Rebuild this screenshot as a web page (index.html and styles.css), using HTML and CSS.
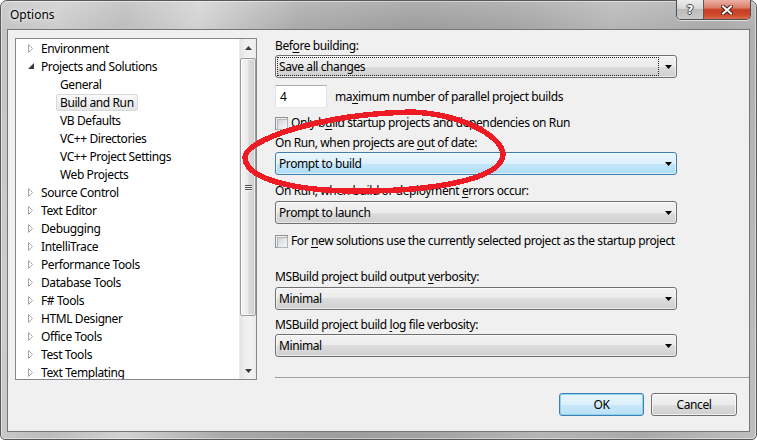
FILE: index.html
```html
<!DOCTYPE html>
<html>
<head>
<meta charset="utf-8">
<title>Options</title>
<link rel="stylesheet" href="styles.css">
</head>
<body>
<div class="window">
  <div class="titlebar">
    <span class="title">Options</span>
    <div class="caps">
      <div class="cap help"><span class="qm">?</span></div>
      <div class="cap close">
        <svg width="12" height="10" viewBox="0 0 12 10"><path d="M2 1.5 L10 8.5 M10 1.5 L2 8.5" stroke="#4a2118" stroke-width="4" stroke-linecap="square"/><path d="M2 1.5 L10 8.5 M10 1.5 L2 8.5" stroke="#ffffff" stroke-width="2" stroke-linecap="square"/></svg>
      </div>
    </div>
  </div>
  <div class="client">
    <div class="main">
      <div class="tree">
        <div class="tree-list">
          <div class="row"><span class="exp"><svg width="6" height="9" viewBox="0 0 6 9"><path d="M0.5 0.5 L4.5 4.5 L0.5 8.5 Z" fill="#fff" stroke="#a6a6a6"/></svg></span>Environment</div>
          <div class="row"><span class="exp"><svg width="6" height="6" viewBox="0 0 6 6"><path d="M6 0 L6 6 L0 6 Z" fill="#3c3c3c"/></svg></span>Projects and Solutions</div>
          <div class="row child">General</div>
          <div class="row child selected"><span class="sel">Build and Run</span></div>
          <div class="row child">VB Defaults</div>
          <div class="row child">VC++ Directories</div>
          <div class="row child">VC++ Project Settings</div>
          <div class="row child">Web Projects</div>
          <div class="row"><span class="exp"><svg width="6" height="9" viewBox="0 0 6 9"><path d="M0.5 0.5 L4.5 4.5 L0.5 8.5 Z" fill="#fff" stroke="#a6a6a6"/></svg></span>Source Control</div>
          <div class="row"><span class="exp"><svg width="6" height="9" viewBox="0 0 6 9"><path d="M0.5 0.5 L4.5 4.5 L0.5 8.5 Z" fill="#fff" stroke="#a6a6a6"/></svg></span>Text Editor</div>
          <div class="row"><span class="exp"><svg width="6" height="9" viewBox="0 0 6 9"><path d="M0.5 0.5 L4.5 4.5 L0.5 8.5 Z" fill="#fff" stroke="#a6a6a6"/></svg></span>Debugging</div>
          <div class="row"><span class="exp"><svg width="6" height="9" viewBox="0 0 6 9"><path d="M0.5 0.5 L4.5 4.5 L0.5 8.5 Z" fill="#fff" stroke="#a6a6a6"/></svg></span>IntelliTrace</div>
          <div class="row"><span class="exp"><svg width="6" height="9" viewBox="0 0 6 9"><path d="M0.5 0.5 L4.5 4.5 L0.5 8.5 Z" fill="#fff" stroke="#a6a6a6"/></svg></span>Performance Tools</div>
          <div class="row"><span class="exp"><svg width="6" height="9" viewBox="0 0 6 9"><path d="M0.5 0.5 L4.5 4.5 L0.5 8.5 Z" fill="#fff" stroke="#a6a6a6"/></svg></span>Database Tools</div>
          <div class="row"><span class="exp"><svg width="6" height="9" viewBox="0 0 6 9"><path d="M0.5 0.5 L4.5 4.5 L0.5 8.5 Z" fill="#fff" stroke="#a6a6a6"/></svg></span>F# Tools</div>
          <div class="row"><span class="exp"><svg width="6" height="9" viewBox="0 0 6 9"><path d="M0.5 0.5 L4.5 4.5 L0.5 8.5 Z" fill="#fff" stroke="#a6a6a6"/></svg></span>HTML Designer</div>
          <div class="row"><span class="exp"><svg width="6" height="9" viewBox="0 0 6 9"><path d="M0.5 0.5 L4.5 4.5 L0.5 8.5 Z" fill="#fff" stroke="#a6a6a6"/></svg></span>Office Tools</div>
          <div class="row"><span class="exp"><svg width="6" height="9" viewBox="0 0 6 9"><path d="M0.5 0.5 L4.5 4.5 L0.5 8.5 Z" fill="#fff" stroke="#a6a6a6"/></svg></span>Test Tools</div>
          <div class="row"><span class="exp"><svg width="6" height="9" viewBox="0 0 6 9"><path d="M0.5 0.5 L4.5 4.5 L0.5 8.5 Z" fill="#fff" stroke="#a6a6a6"/></svg></span>Text Templating</div>
        </div>
        <div class="vscroll">
          <div class="sb-btn"><svg width="7" height="4" viewBox="0 0 7 4"><path d="M3.5 0 L7 4 L0 4 Z" fill="#3b3b3b"/></svg></div>
          <div class="sb-track">
            <div class="thumb">
              <div class="grip"><i></i><i></i><i></i></div>
            </div>
          </div>
          <div class="sb-btn"><svg width="7" height="4" viewBox="0 0 7 4"><path d="M0 0 L7 0 L3.5 4 Z" fill="#3b3b3b"/></svg></div>
        </div>
      </div>
      <div class="right">
        <div class="panel">
          <div class="lbl">Bef<u>o</u>re building:</div>
          <div class="combo focused m1">
            <span class="focus">Save all changes</span>
            <svg class="arr" width="7" height="4" viewBox="0 0 7 4"><path d="M0 0 L7 0 L3.5 4 Z" fill="#000"/></svg>
          </div>
          <div class="num-row">
            <span class="textbox">4</span>
            <span>ma<u>x</u>imum number of parallel project builds</span>
          </div>
          <div class="chk-row r1"><span class="chk"></span><span>Only b<u>u</u>ild startup projects and dependencies on Run</span></div>
          <div class="lbl l2">On Run, when projects are <u>o</u>ut of date:</div>
          <div class="combo hover m1">
            <span class="ctext">Prompt to build</span>
            <svg class="arr" width="7" height="4" viewBox="0 0 7 4"><path d="M0 0 L7 0 L3.5 4 Z" fill="#000"/></svg>
          </div>
          <div class="lbl l3">On Run, when build or deployment <u>e</u>rrors occur:</div>
          <div class="combo m2">
            <span class="ctext">Prompt to launch</span>
            <svg class="arr" width="7" height="4" viewBox="0 0 7 4"><path d="M0 0 L7 0 L3.5 4 Z" fill="#000"/></svg>
          </div>
          <div class="chk-row r2"><span class="chk"></span><span>For <u>n</u>ew solutions use the currently selected project as the startup project</span></div>
          <div class="lbl l4">MSBuild project build output <u>v</u>erbosity:</div>
          <div class="combo m2">
            <span class="ctext">Minimal</span>
            <svg class="arr" width="7" height="4" viewBox="0 0 7 4"><path d="M0 0 L7 0 L3.5 4 Z" fill="#000"/></svg>
          </div>
          <div class="lbl l5">MSBuild project build <u>l</u>og file verbosity:</div>
          <div class="combo m1">
            <span class="ctext">Minimal</span>
            <svg class="arr" width="7" height="4" viewBox="0 0 7 4"><path d="M0 0 L7 0 L3.5 4 Z" fill="#000"/></svg>
          </div>
        </div>
        <div class="sep"></div>
      </div>
    </div>
    <div class="buttons">
      <div class="btn default ok">OK</div>
      <div class="btn cancel">Cancel</div>
    </div>
  </div>
</div>
<svg class="annot" width="757" height="440" viewBox="0 0 757 440">
  <path d="M 412 112 C 470 115, 504 140, 503 155 C 501 180, 430 192, 350 191 C 290 190, 246 178, 245 158 C 244 140, 320 114, 412 112 Z" fill="none" stroke="#ed1c24" stroke-width="5.5" shape-rendering="crispEdges"/>
</svg>
</body>
</html>
```

FILE: styles.css
```css
* { box-sizing: border-box; }
html, body { margin: 0; padding: 0; }
body {
  position: relative;
  width: 757px;
  height: 440px;
  background: #ffffff;
  font-family: "Noto Sans", "Segoe UI", sans-serif;
  font-size: 12px;
  letter-spacing: -0.4px;
  color: #000;
  overflow: hidden;
}
u { text-decoration: underline; text-underline-offset: 2px; }

.window {
  width: 757px;
  height: 440px;
  border: 1px solid #5a5a5a;
  border-radius: 7px 7px 5px 5px;
  padding: 0 6px 7px 6px;
  display: flex;
  flex-direction: column;
  background:
    linear-gradient(to bottom, rgba(255,255,255,0.18), rgba(255,255,255,0) 28px),
    linear-gradient(100deg, #c3c3c3 0%, #cdcdcd 7%, #bcbcbc 15%, #d2d2d2 24%, #aaaaaa 36%, #9d9d9d 50%, #a4a4a4 62%, #b6b6b6 74%, #a9a9a9 86%, #bfbfbf 100%);
  box-shadow: inset 0 0 0 1px rgba(255,255,255,0.45);
}

.titlebar {
  height: 28px;
  display: flex;
  justify-content: space-between;
  align-items: flex-start;
}
.title {
  padding: 6px 0 0 3px;
  line-height: 16px;
  color: #000;
  letter-spacing: 0;
  text-shadow: 0 0 6px rgba(255,255,255,0.9), 0 0 3px rgba(255,255,255,0.8);
}
.caps {
  display: flex;
  margin-top: -1px;
  margin-right: -1px;
  border: 1px solid #4e4e4e;
  border-top: none;
  border-radius: 0 0 5px 5px;
  overflow: hidden;
  box-shadow: 0 1px 0 rgba(255,255,255,0.6);
}
.cap {
  height: 19px;
  display: flex;
  align-items: center;
  justify-content: center;
}
.help {
  width: 27px;
  border-right: 1px solid #5a5a5a;
  background: linear-gradient(#ececec 0%, #d6d6d6 45%, #bcbcbc 50%, #c9c9c9 100%);
}
.qm {
  font-family: "DejaVu Sans", sans-serif;
  font-weight: bold;
  font-size: 12px;
  line-height: 12px;
  color: #fff;
  letter-spacing: 0;
  text-shadow: 1px 0 0 #444, -1px 0 0 #444, 0 1px 0 #444, 0 -1px 0 #444;
}
.close {
  width: 46px;
  background: linear-gradient(#eab1a5 0%, #dc7e69 40%, #c63d24 52%, #cf4a2e 80%, #dd6d4d 100%);
}

.client {
  height: 403px;
  border: 1px solid #767676;
  background: #f0f0f0;
  display: flex;
  flex-direction: column;
  padding: 8px 0 0 7px;
}
.main {
  display: flex;
  gap: 18px;
  height: 342px;
}

/* tree */
.tree {
  width: 242px;
  height: 342px;
  border: 1px solid #828790;
  background: #fff;
  display: flex;
  flex: none;
}
.tree-list {
  flex: 1;
  overflow: hidden;
}
.row {
  height: 18px;
  line-height: 16px;
  display: flex;
  align-items: center;
  white-space: nowrap;
  padding-left: 12px;
  padding-top: 2px;
}
.exp {
  width: 13px;
  flex: none;
  display: flex;
  align-items: center;
  margin-top: -2px;
}
.row.child { padding-left: 44px; }
.row.child.selected { padding-left: 40px; padding-top: 0; align-items: flex-end; }
.sel {
  height: 17px;
  display: flex;
  align-items: center;
  padding: 1px 3px 0 3px;
  border: 1px solid #d9d9d9;
  border-radius: 2px;
  background: linear-gradient(#fafafa, #e5e5e5);
}

.vscroll {
  width: 17px;
  flex: none;
  display: flex;
  flex-direction: column;
  background: linear-gradient(to right, #e3e3e3 0%, #eeeeee 30%, #f2f2f2 70%, #ebebeb 100%);
  border-left: 1px solid #ececec;
}
.sb-btn {
  height: 17px;
  display: flex;
  align-items: center;
  justify-content: center;
}
.sb-track {
  flex: 1;
  padding: 2px 0 0 0;
}
.thumb {
  height: 258px;
  border: 1px solid #9b9b9b;
  border-radius: 2px;
  background: linear-gradient(to right, #f4f4f4 0%, #ececec 45%, #dcdcdc 55%, #cdcdcd 100%);
  box-shadow: inset 0 0 0 1px rgba(255,255,255,0.6);
  display: flex;
  align-items: center;
  justify-content: center;
}
.grip {
  display: flex;
  flex-direction: column;
  gap: 1px;
}
.grip i {
  display: block;
  width: 7px;
  height: 1px;
  background: #4f4f4f;
  box-shadow: 0 1px 0 #f7f7f7;
}

/* right side */
.right {
  flex: 1;
  display: flex;
  flex-direction: column;
}
.panel {
  width: 402px;
  display: flex;
  flex-direction: column;
}
.lbl {
  height: 16px;
  line-height: 16px;
  white-space: nowrap;
}
.combo {
  height: 23px;
  border: 1px solid #707070;
  border-radius: 3px;
  display: flex;
  align-items: center;
  padding-left: 3px;
  padding-right: 4px;
  background: linear-gradient(#f2f2f2 0%, #ebebeb 50%, #dddddd 50%, #cfcfcf 100%);
  box-shadow: inset 0 0 0 1px rgba(255,255,255,0.55);
}
.combo .ctext { flex: 1; line-height: 16px; }
.combo.focused { padding-left: 1px; }
.combo .focus {
  width: 382px;
  height: 19px;
  border: 1px dotted #222;
  padding-left: 1px;
  display: flex;
  align-items: center;
  margin-right: auto;
}
.combo.hover {
  border-color: #3c7fb1;
  background: linear-gradient(#eaf6fd 0%, #dcf0fc 50%, #c4e7fb 50%, #aedcf6 100%);
}
.arr { flex: none; }
.m1 { margin-top: 1px; }
.m2 { margin-top: 2px; }

.num-row {
  margin-top: 7px;
  height: 23px;
  display: flex;
  align-items: center;
  gap: 8px;
}
.textbox {
  width: 52px;
  height: 23px;
  border: 1px solid;
  border-color: #abadb3 #dbdfe6 #e3e9ef #e2e3ea;
  background: #fff;
  padding-left: 4px;
  display: flex;
  align-items: center;
}
.chk-row {
  height: 14px;
  line-height: 14px;
  display: flex;
  align-items: center;
  gap: 3px;
  white-space: nowrap;
}
.chk-row.r1 { margin-top: 8px; }
.chk-row.r2 { margin-top: 10px; }
.chk {
  width: 13px;
  height: 13px;
  flex: none;
  border: 1px solid #8e8f8f;
  background: #f4f4f4;
  padding: 1px;
}
.chk::before {
  content: "";
  display: block;
  width: 9px;
  height: 9px;
  border: 1px solid #b1b5ba;
  background: linear-gradient(135deg, #cfd2d6 0%, #e6e7e9 50%, #f8f8f8 100%);
}
.l2 { margin-top: 5px; }
.l3 { margin-top: 8px; }
.l4 { margin-top: 21px; }
.l5 { margin-top: 7px; }

.sep {
  margin-top: 20px;
  height: 1px;
  background: #a0a0a0;
}

.buttons {
  display: flex;
  justify-content: flex-end;
  gap: 7px;
  padding-right: 12px;
  margin-top: 13px;
}
.btn {
  height: 23px;
  border: 1px solid #707070;
  border-radius: 3px;
  display: flex;
  align-items: center;
  justify-content: center;
  background: linear-gradient(#f2f2f2 0%, #ebebeb 50%, #dddddd 50%, #cfcfcf 100%);
  box-shadow: inset 0 0 0 1px rgba(255,255,255,0.7);
}
.btn.ok { width: 85px; }
.btn.cancel { width: 86px; }
.btn.default {
  border-color: #3c7fb1;
  background: linear-gradient(#e8f5fc 0%, #dcf0fb 50%, #c9e8f9 50%, #b9e0f5 100%);
  box-shadow: inset 0 0 0 1px #8fd3f2;
}

.annot {
  position: absolute;
  left: 0;
  top: 0;
  pointer-events: none;
}
```
